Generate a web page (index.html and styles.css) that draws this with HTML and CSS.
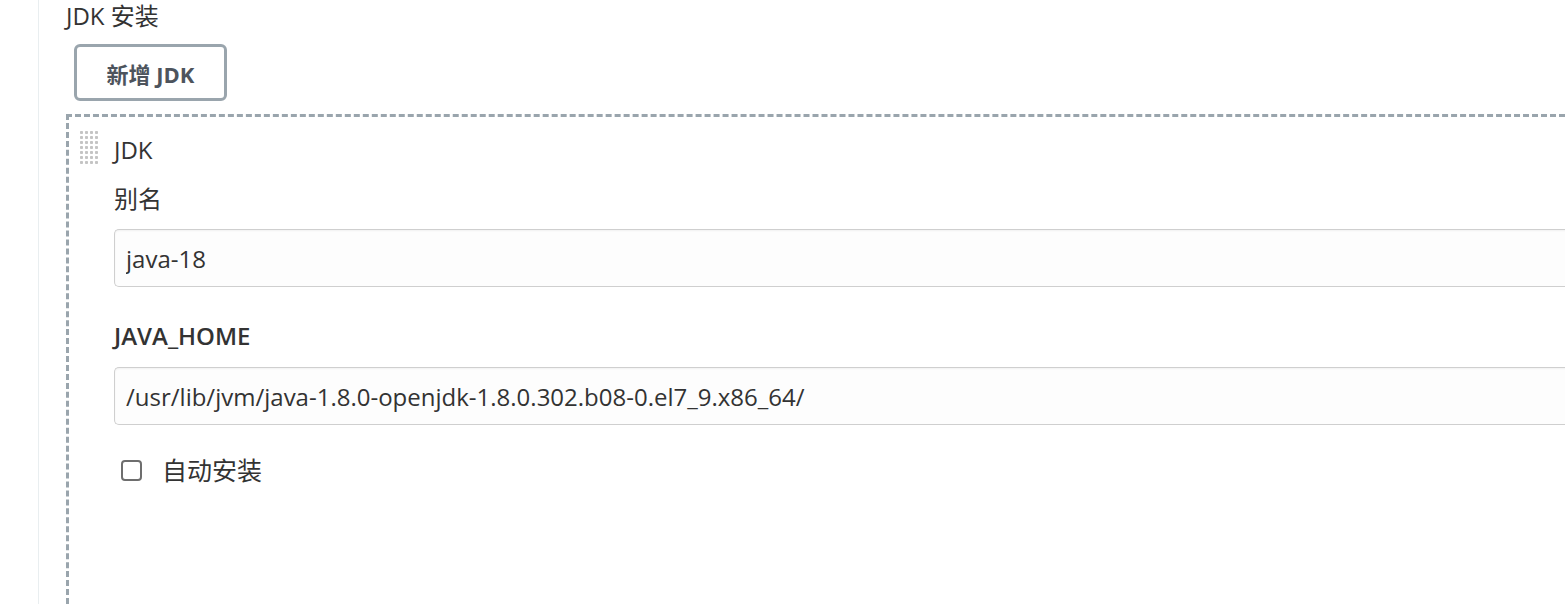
FILE: index.html
```html
<!DOCTYPE html>
<html lang="zh">
<head>
<meta charset="utf-8">
<link rel="stylesheet" href="styles.css">
</head>
<body>
<div class="page">
  <div class="rail"></div>
  <main class="content">
    <h2 class="section-title">JDK 安装</h2>
    <div class="actions">
      <button class="btn-add" type="button">新增 JDK</button>
    </div>
    <div class="repeated">
      <div class="handle"></div>
      <div class="chunk">
        <div class="chunk-title">JDK</div>
        <div class="field">
          <div class="label">别名</div>
          <input class="text-input" type="text" value="java-18">
        </div>
        <div class="field field-gap">
          <div class="label label-bold">JAVA_HOME</div>
          <input class="text-input" type="text" value="/usr/lib/jvm/java-1.8.0-openjdk-1.8.0.302.b08-0.el7_9.x86_64/">
        </div>
        <label class="check-row">
          <span class="checkbox"></span>
          <span class="check-label">自动安装</span>
        </label>
      </div>
    </div>
  </main>
</div>
</body>
</html>
```
FILE: styles.css
```css
html, body {
  margin: 0;
  padding: 0;
  background: #ffffff;
  overflow: hidden;
}
body {
  font-family: "Open Sans", "Noto Sans CJK SC", sans-serif;
  color: #333333;
  width: 1565px;
  height: 604px;
}
.page {
  display: flex;
  height: 604px;
  overflow: hidden;
}
.rail {
  width: 38px;
  flex: none;
  border-right: 1px solid #e9eef0;
}
.content {
  flex: 1;
  display: flex;
  flex-direction: column;
  padding-left: 27px;
  min-width: 0;
}
.section-title {
  margin: 0;
  font-size: 24px;
  font-weight: 400;
  line-height: 32px;
  height: 32px;
  color: #333;
}
.actions {
  padding: 12px 0 13px 8px;
}
.btn-add {
  display: block;
  width: 153px;
  height: 57px;
  border: 3px solid #9aa5ad;
  border-radius: 6px;
  background: #fff;
  font-family: "Open Sans", "Noto Sans CJK SC", sans-serif;
  font-size: 22px;
  font-weight: 700;
  color: #4d545d;
  padding: 0;
}
.repeated {
  flex: 1;
  display: flex;
  border: 3px dashed #9aa5ad;
  border-right: none;
  border-bottom: none;
  padding: 13px 0 0 10px;
}
.handle {
  width: 21px;
  height: 36px;
  flex: none;
  background-image: radial-gradient(circle, #c4c4c4 1.3px, transparent 1.9px);
  background-size: 5px 5px;
}
.chunk {
  flex: 1;
  padding-left: 14px;
  min-width: 0;
}
.chunk-title {
  font-size: 24px;
  line-height: 40px;
}
.field {
  display: flex;
  flex-direction: column;
  padding-top: 13px;
}
.field-gap {
  padding-top: 33px;
}
.label {
  font-size: 24px;
  line-height: 32px;
  padding-bottom: 14px;
}
.label-bold {
  font-weight: 600;
  padding-bottom: 15px;
}
.text-input {
  box-sizing: border-box;
  width: 1460px;
  height: 58px;
  border: 1px solid #cfcfcf;
  border-right: none;
  border-radius: 5px 0 0 5px;
  background: #fdfdfd;
  box-shadow: inset 0 1px 2px rgba(0,0,0,0.05);
  padding: 0 11px;
  font-family: "Open Sans", "Noto Sans CJK SC", sans-serif;
  font-size: 24px;
  color: #333;
  outline: none;
}
.check-row {
  display: flex;
  align-items: center;
  gap: 20px;
  padding: 29px 0 0 7px;
}
.checkbox {
  box-sizing: border-box;
  width: 21px;
  height: 21px;
  border: 2px solid #6e6e6e;
  border-radius: 4px;
  background: #fff;
}
.check-label {
  font-size: 25px;
  line-height: 32px;
}
```
